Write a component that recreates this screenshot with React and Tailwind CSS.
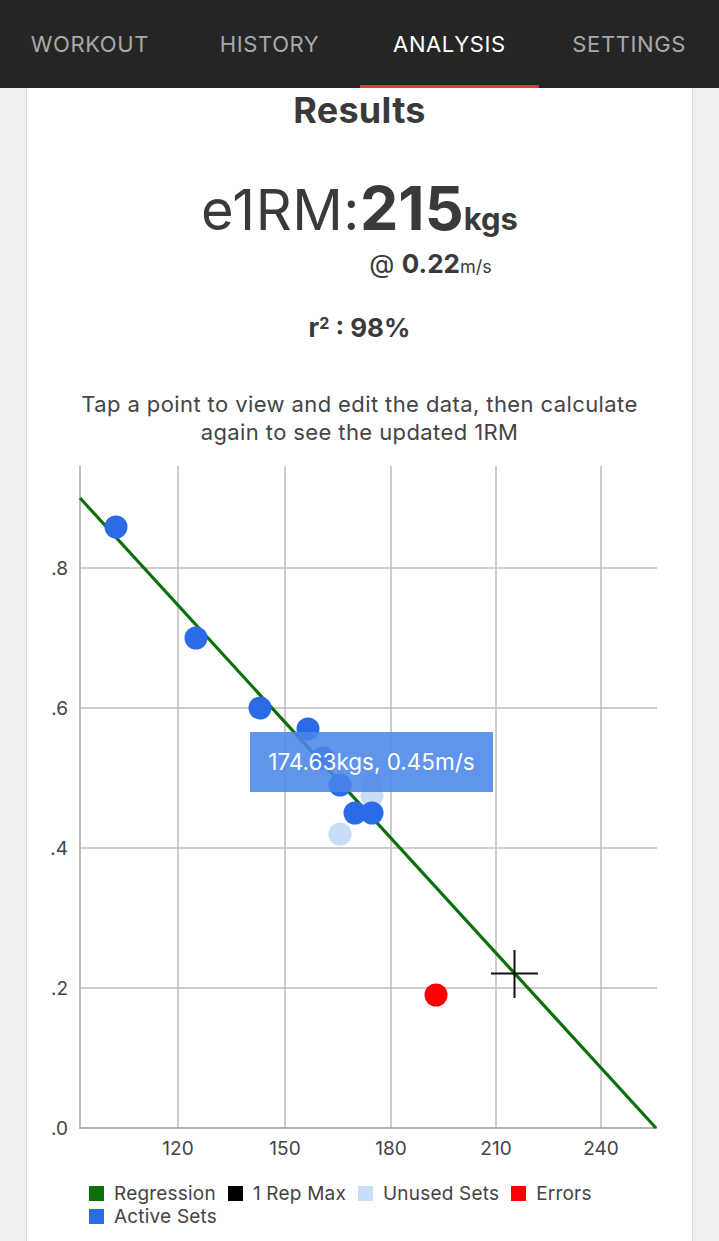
import React from 'react';

// Analysis screen: estimated 1RM results and load/velocity chart.
const tabs = ['WORKOUT', 'HISTORY', 'ANALYSIS', 'SETTINGS'];

const active = [
    [116, 526], [196, 637], [260, 707], [308, 728], [323, 757],
    [340, 784], [355, 812], [372, 812],
];
const unused = [[372, 782], [372, 795], [340, 833]];
const xTicks = [[178, '120'], [285, '150'], [391, '180'], [496, '210'], [601, '240']];
const yTicks = [[567, '.8'], [707, '.6'], [847, '.4'], [987, '.2'], [1127, '.0']];

const legend = [
    ['bg-[#0b700b]', 'Regression'],
    ['bg-black', '1 Rep Max'],
    ['bg-[#c9dcf8]', 'Unused Sets'],
    ['bg-[#ff0000]', 'Errors'],
    ['bg-[#2a6be7]', 'Active Sets'],
];

const Chart = () => (
    <svg width="665" height="720" viewBox="27 455 665 720" className="block">
        {/* grid */}
        {xTicks.map(([x]) => (
            <line key={x} x1={x} y1="465" x2={x} y2="1127" stroke="#bdbdbd" strokeWidth="1.5" />
        ))}
        {yTicks.slice(0, 4).map(([y]) => (
            <line key={y} x1="80" y1={y} x2="657" y2={y} stroke="#bdbdbd" strokeWidth="1.5" />
        ))}
        <line x1="80" y1="465" x2="80" y2="1128" stroke="#a8a8a8" strokeWidth="1.5" />
        <line x1="80" y1="1127" x2="657" y2="1127" stroke="#9a9a9a" strokeWidth="1.5" />

        {xTicks.map(([x, t]) => (
            <text key={t} x={x} y="1154" textAnchor="middle" fontSize="19" fill="#444">{t}</text>
        ))}
        {yTicks.map(([y, t]) => (
            <text key={t} x="68" y={y + 7} textAnchor="end" fontSize="19" fill="#444">{t}</text>
        ))}

        {/* regression */}
        <line x1="80" y1="497" x2="656" y2="1127" stroke="#0b700b" strokeWidth="3.2" />

        {unused.map(([x, y], i) => (
            <circle key={'u' + i} cx={x} cy={y} r="11.5" fill="#c9dcf8" />
        ))}
        {active.map(([x, y], i) => (
            <circle key={'a' + i} cx={x} cy={y} r="11.5" fill="#2a6be7" />
        ))}
        <circle cx="436" cy="994" r="11.5" fill="#ff0000" />

        {/* 1RM marker */}
        <line x1="491" y1="972.5" x2="538" y2="972.5" stroke="#111" strokeWidth="2" />
        <line x1="514.5" y1="949" x2="514.5" y2="997" stroke="#111" strokeWidth="2" />

        {/* tooltip */}
        <rect x="250" y="731" width="243" height="60" fill="#4a86e8" fillOpacity="0.88" />
        <text x="371.5" y="769" textAnchor="middle" fontSize="22.5" fill="#fff">174.63kgs, 0.45m/s</text>
    </svg>
);

export default function App() {
    return (
        <div className="min-h-[1241px] bg-[#efefef] font-['Inter','Liberation_Sans',sans-serif]">
            <nav className="grid grid-cols-4 h-[88px] bg-[#252525]">
                {tabs.map((t) => (
                    <div key={t} className="relative flex items-center justify-center">
                        <span className={`text-[22px] tracking-[0.6px] ${t === 'ANALYSIS' ? 'text-white' : 'text-[#a9a9a9]'}`}>{t}</span>
                        {t === 'ANALYSIS' && <div className="absolute bottom-0 left-0 right-0 h-[3px] bg-[#e0393e]" />}
                    </div>
                ))}
            </nav>
            <main className="px-[26px]">
                <div className="bg-white border-x border-[#dcdcdc] min-h-[1153px] text-[#3a3a3a]">
                    <h2 className="pt-[1px] text-center text-[36px] leading-[42px] font-bold tracking-[0.3px]">Results</h2>

                    <div className="mt-[44px] flex items-baseline justify-center leading-[66px]">
                        <span className="text-[56px] tracking-[0.5px]">e1RM:</span>
                        <span className="text-[61px] font-bold">215</span>
                        <span className="text-[31px] font-bold">kgs</span>
                    </div>
                    <div className="-mt-[4px] flex items-baseline justify-center pl-[142px] leading-[32px]">
                        <span className="text-[26px]">@&nbsp;</span>
                        <span className="text-[26px] font-bold">0.22</span>
                        <span className="text-[18px]">m/s</span>
                    </div>

                    <div className="mt-[28px] text-center text-[26px] font-bold leading-[34px]">
                        r<sup className="text-[16px]">2</sup> : 98%
                    </div>

                    <p className="mt-[45px] text-center text-[22px] leading-[28px] tracking-[0.4px] text-[#444]">
                        Tap a point to view and edit the data, then calculate<br />again to see the updated 1RM
                    </p>

                    <div className="mt-[10px]">
                        <Chart />
                    </div>

                    <div className="mt-[6px] flex flex-wrap pl-[62px] pr-[20px] text-[19px] leading-[23px] tracking-[0.2px] text-[#444]">
                        {legend.map(([c, label]) => (
                            <div key={label} className="flex items-center mr-[12px]">
                                <span className={`w-[15px] h-[15px] mr-[10px] ${c}`} />
                                <span>{label}</span>
                            </div>
                        ))}
                    </div>
                </div>
            </main>
        </div>
    );
}
